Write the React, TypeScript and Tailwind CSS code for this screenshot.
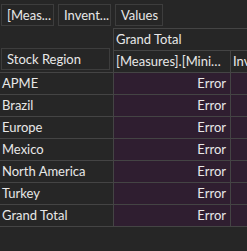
const rows = ["APME", "Brazil", "Europe", "Mexico", "North America", "Turkey", "Grand Total"]

function Chip({ label, w }: { label: string; w: string }) {
  return (
    <div className={`${w} flex h-[22px] items-center border border-[#3d3d3d] pl-[5px] whitespace-nowrap overflow-hidden`}>
      {label}
    </div>
  )
}

export default function App() {
  return (
    <div
      className="h-[251px] w-[247px] overflow-hidden bg-[#262626] text-[13px] leading-none text-[#e8e8e8]"
      style={{ fontFamily: '"Segoe UI", Lato, sans-serif' }}
    >
      <div className="mb-0.5 flex gap-1 pl-px pt-1">
        <Chip label="[Meas..." w="w-[53px]" />
        <Chip label="Invent..." w="w-[53px]" />
        <Chip label="Values" w="w-[48px]" />
      </div>

      <div className="flex">
        <div className="flex h-[44px] w-[113px] shrink-0 items-end pb-[2px] pl-px">
          <div className="flex h-[22px] w-[109px] items-center border border-[#3d3d3d] pl-[5px]">Stock Region</div>
        </div>
        <div className="flex min-w-0 flex-1 flex-col">
          <div className="flex h-[22px] items-center whitespace-nowrap border-l border-t border-[#444] pl-[2px]">Grand Total</div>
          <div className="flex h-[22px] border-t border-[#444]">
            <div className="flex w-[117px] shrink-0 items-center overflow-hidden border-l border-[#444] pl-[2px] pr-1">
              <span className="truncate">[Measures].[Minimum Inventory]</span>
            </div>
            <div className="flex min-w-0 flex-1 items-center overflow-hidden whitespace-nowrap border-l border-[#444] pl-[2px]">
              Inv
            </div>
          </div>
        </div>
      </div>

      <div className="border-b border-[#444]">
        {rows.map((r) => (
          <div key={r} className="flex h-[22px] border-t border-[#444]">
            <div className="flex w-[113px] shrink-0 items-center whitespace-nowrap pl-[2px]">{r}</div>
            <div className="flex w-[117px] shrink-0 items-center justify-end border-l border-[#444] bg-[#2f1e30] pr-[4px]">
              Error
            </div>
            <div className="flex-1 border-l border-[#444] bg-[#2f1e30]" />
          </div>
        ))}
      </div>
    </div>
  )
}
